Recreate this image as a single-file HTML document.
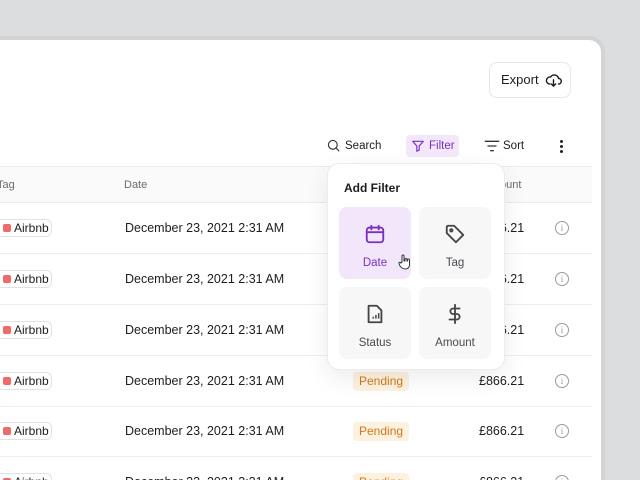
<!DOCTYPE html><html style="width:640px;height:480px;overflow:hidden"><head><style>
*{margin:0;padding:0;box-sizing:border-box}
body{width:640px;height:480px;overflow:hidden;background:#dcdddf;font-family:"Liberation Sans",sans-serif;position:relative;color:#1d1d1f}
.card{position:absolute;left:-20px;top:40px;width:621px;height:440px;background:#fff;border-radius:12px 12px 0 0;box-shadow:0 0 0 4px #d2d3d5}
.abs{position:absolute}
.export{left:489px;top:62px;width:82px;height:36px;border:1px solid #e6e6e8;border-radius:8px;background:#fff;font-size:13px;line-height:34px;padding-left:11px;color:#1d1d1f}
.tb{font-size:11.5px;top:139px;line-height:14px}
.hdr{left:0;top:166px;width:592px;height:37px;background:#fafafa;border-top:1px solid #ececee;border-bottom:1px solid #ececee}
.hdr span{position:absolute;top:12px;font-size:11px;color:#6b6b70}
.row{left:0;width:592px;height:51px;border-bottom:1px solid #eeeef0;overflow:hidden}
.tag{position:absolute;left:-10px;top:16px;height:18px;width:62px;border:1px solid #e2e2e4;border-radius:6px;font-size:12px;line-height:16px;padding-left:23px;background:#fff}
.tag:before{content:"";position:absolute;left:12px;top:4px;width:8px;height:8px;border-radius:2px;background:#ef6a6a}
.date{position:absolute;left:125px;top:18px;font-size:12.5px}
.pend{position:absolute;left:353px;top:16px;height:19px;padding:0 6px;background:#fdf1df;color:#d0781a;font-size:12px;line-height:19px;border-radius:4px}
.amt{position:absolute;left:479px;top:18px;font-size:12.5px}
.info{position:absolute;left:555px;top:18px;width:14px;height:14px;border:1.2px solid #9a9a9e;border-radius:50%;font-size:9px;color:#9a9a9e;text-align:center;line-height:12px;font-family:"Liberation Serif",serif}
.pop{left:327px;top:163px;width:178px;height:207px;background:#fff;border:1px solid #ececee;border-radius:12px;box-shadow:0 8px 24px rgba(0,0,0,.08)}
.tile{position:absolute;width:72px;height:72px;border-radius:8px;background:#f7f7f8;text-align:center;font-size:11.5px;color:#4a4a50}
.tile svg{position:absolute;left:25px;top:16px}
.tile span{position:absolute;left:0;right:0;top:50px}
</style></head><body>
<div class="card"></div>
<div class="abs export">Export
<svg class="abs" style="left:55px;top:9px" width="17" height="17" viewBox="0 0 24 24" fill="none" stroke="#1d1d1f" stroke-width="2" stroke-linecap="round" stroke-linejoin="round"><path d="M7 17a5 5 0 1 1 1-9.9A6 6 0 0 1 19 9a4 4 0 0 1 0 8"/><path d="M12 11v9M9 17l3 3 3-3"/></svg></div>

<svg class="abs" style="left:327px;top:139px" width="14" height="14" viewBox="0 0 24 24" fill="none" stroke="#333" stroke-width="2"><circle cx="10" cy="10" r="7.5"/><path d="M16 16l5 5"/></svg>
<div class="abs tb" style="left:345px">Search</div>
<div class="abs" style="left:406px;top:135px;width:53px;height:22px;background:#f3e8fb;border-radius:4px"></div>
<svg class="abs" style="left:411px;top:139px" width="14" height="14" viewBox="0 0 24 24" fill="none" stroke="#7b2fbf" stroke-width="2" stroke-linejoin="round"><path d="M3 4h18l-7 8v7l-4 2v-9z"/></svg>
<div class="abs tb" style="left:429px;color:#7b2fbf">Filter</div>
<svg class="abs" style="left:484px;top:139px" width="16" height="14" viewBox="0 0 24 20" fill="none" stroke="#333" stroke-width="2" stroke-linecap="round"><path d="M2 3h20M6 10h12M10 17h4"/></svg>
<div class="abs tb" style="left:503px">Sort</div>
<div class="abs" style="left:560px;top:140px;width:3px;height:3px;background:#222;border-radius:50%;box-shadow:0 5px 0 #222,0 10px 0 #222"></div>

<div class="abs hdr"><span style="left:-3px">Tag</span><span style="left:124px">Date</span><span style="left:500px">ount</span></div>

<div class="abs row" style="top:203px"><div class="tag">Airbnb</div><div class="date">December 23, 2021 2:31 AM</div><div class="amt">£866.21</div><div class="info">i</div></div>
<div class="abs row" style="top:254px"><div class="tag">Airbnb</div><div class="date">December 23, 2021 2:31 AM</div><div class="amt">£866.21</div><div class="info">i</div></div>
<div class="abs row" style="top:305px"><div class="tag">Airbnb</div><div class="date">December 23, 2021 2:31 AM</div><div class="amt">£866.21</div><div class="info">i</div></div>
<div class="abs row" style="top:356px"><div class="tag">Airbnb</div><div class="date">December 23, 2021 2:31 AM</div><div class="pend">Pending</div><div class="amt">£866.21</div><div class="info">i</div></div>
<div class="abs row" style="top:406px"><div class="tag">Airbnb</div><div class="date">December 23, 2021 2:31 AM</div><div class="pend">Pending</div><div class="amt">£866.21</div><div class="info">i</div></div>
<div class="abs row" style="top:457px;height:23px;border:none"><div class="tag">Airbnb</div><div class="date">December 23, 2021 2:31 AM</div><div class="pend">Pending</div><div class="amt">£866.21</div><div class="info">i</div></div>

<div class="abs pop">
<div class="abs" style="left:16px;top:17px;font-size:12px;font-weight:bold">Add Filter</div>
<div class="tile" style="left:11px;top:43px;background:#f2e6fb;color:#7b2fbf"><svg width="22" height="22" viewBox="0 0 24 24" fill="none" stroke="#7b2fbf" stroke-width="2" stroke-linecap="round"><rect x="3" y="5" width="18" height="16" rx="3"/><path d="M3 10h18M8 3v4M16 3v4"/></svg><span>Date</span></div>
<div class="tile" style="left:91px;top:43px"><svg width="22" height="22" viewBox="0 0 24 24" fill="none" stroke="#444" stroke-width="2" stroke-linejoin="round"><path d="M3 4v7l10 10 8-8L11 3H4z"/><circle cx="8" cy="8" r="1.3"/></svg><span>Tag</span></div>
<div class="tile" style="left:11px;top:123px"><svg width="22" height="22" viewBox="0 0 24 24" fill="none" stroke="#444" stroke-width="2" stroke-linejoin="round"><path d="M5 3h9l5 5v13H5z"/><path d="M10 17v-2M13 17v-4M16 17v-6" stroke-width="1.6"/></svg><span>Status</span></div>
<div class="tile" style="left:91px;top:123px"><svg width="22" height="22" viewBox="0 0 24 24" fill="none" stroke="#444" stroke-width="2" stroke-linecap="round"><path d="M12 2v20M17 6H10a3 3 0 0 0 0 6h4a3 3 0 0 1 0 6H6"/></svg><span>Amount</span></div>
<svg class="abs" style="left:70px;top:90px" width="14" height="16" viewBox="0 0 14 16" fill="#fff" stroke="#333" stroke-width="1"><path d="M4 8V2a1 1 0 0 1 2 0v5h1V5.5a1 1 0 0 1 2 0V7h.5V6a1 1 0 0 1 2 0v5c0 2-1.5 4-4 4S3.5 14 2 12L1 9.5a1 1 0 0 1 2-.5z"/></svg>
</div>
</body></html>
